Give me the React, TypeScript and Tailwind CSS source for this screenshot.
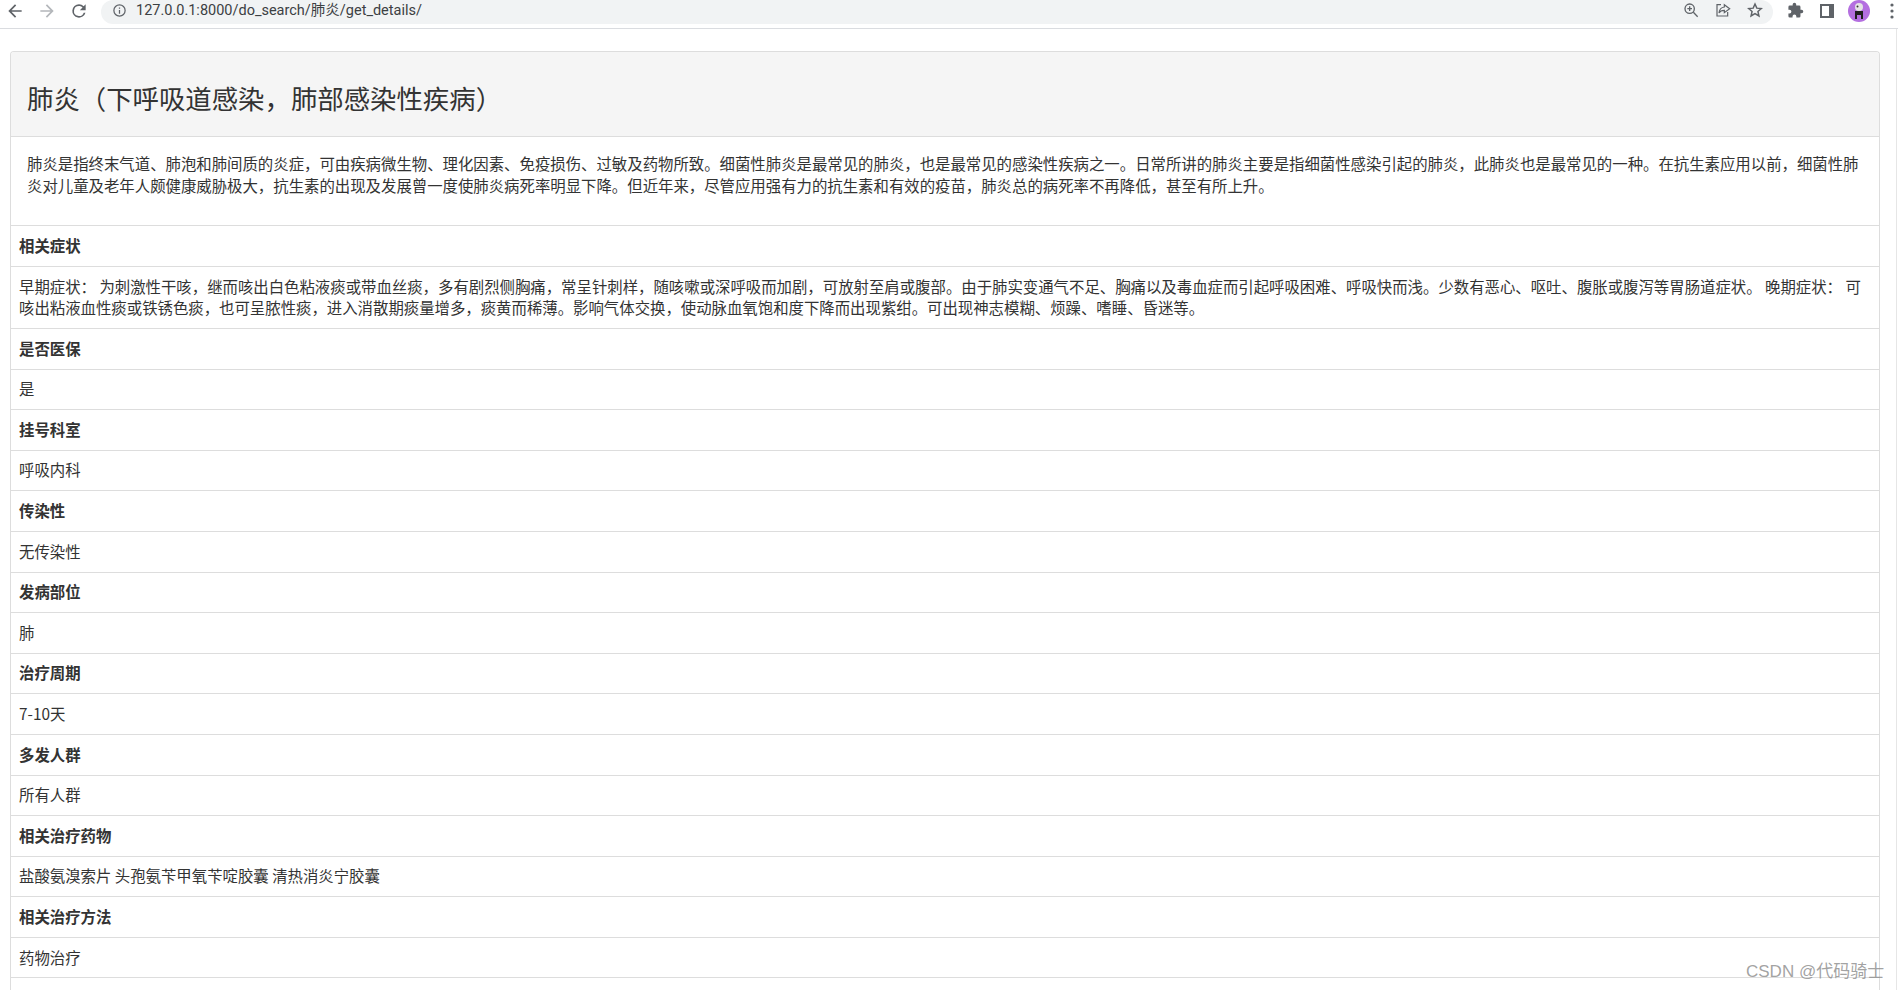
import React from "react";

const font = { fontFamily: '"Noto Sans CJK SC", "Liberation Sans", sans-serif' };

const rows: [string, string][] = [
  ["相关症状", "早期症状： 为刺激性干咳，继而咳出白色粘液痰或带血丝痰，多有剧烈侧胸痛，常呈针刺样，随咳嗽或深呼吸而加剧，可放射至肩或腹部。由于肺实变通气不足、胸痛以及毒血症而引起呼吸困难、呼吸快而浅。少数有恶心、呕吐、腹胀或腹泻等胃肠道症状。 晚期症状： 可咳出粘液血性痰或铁锈色痰，也可呈脓性痰，进入消散期痰量增多，痰黄而稀薄。影响气体交换，使动脉血氧饱和度下降而出现紫绀。可出现神志模糊、烦躁、嗜睡、昏迷等。"],
  ["是否医保", "是"],
  ["挂号科室", "呼吸内科"],
  ["传染性", "无传染性"],
  ["发病部位", "肺"],
  ["治疗周期", "7-10天"],
  ["多发人群", "所有人群"],
  ["相关治疗药物", "盐酸氨溴索片 头孢氨苄甲氧苄啶胶囊 清热消炎宁胶囊"],
  ["相关治疗方法", "药物治疗"],
];

function Item({ children, bold }: { children: React.ReactNode; bold?: boolean }) {
  return (
    <div className={`border-b border-[#dddddd] pl-[8px] pr-[12px] pt-[8.7px] pb-[9.5px] text-[15.4px] leading-[21.4px] ${bold ? "font-bold" : ""}`}>
      {children}
    </div>
  );
}

export default function App() {
  return (
    <div className="relative flex h-[990px] w-[1898px] flex-col overflow-hidden bg-white text-[#333333]" style={font}>
      {/* browser toolbar */}
      <div className="flex h-[29px] shrink-0 items-start border-b border-[#dadce0] bg-white">
        <div className="flex h-[21px] w-[101px] shrink-0 items-center text-[#5f6368]">
          <svg className="ml-[5px]" width="20" height="20" viewBox="0 0 24 24" fill="currentColor"><path d="M20 11H7.83l5.59-5.59L12 4l-8 8 8 8 1.41-1.41L7.83 13H20z" /></svg>
          <svg className="ml-[12px] text-[#b4b7bb]" width="20" height="20" viewBox="0 0 24 24" fill="currentColor"><path d="M12 4l-1.41 1.41L16.17 11H4v2h12.17l-5.58 5.59L12 20l8-8z" /></svg>
          <svg className="ml-[12px]" width="20" height="20" viewBox="0 0 24 24" fill="currentColor"><path d="M17.65 6.35A7.96 7.96 0 0 0 12 4a8 8 0 1 0 7.73 10h-2.08A6 6 0 1 1 12 6c1.66 0 3.14.69 4.22 1.78L13 11h7V4z" /></svg>
        </div>
        <div className="flex h-[24px] w-[1672px] items-center rounded-[12px] bg-[#f1f3f4] pb-[4px] pl-[11px] pr-[10px]">
          <svg width="15" height="15" viewBox="0 0 24 24" fill="none" stroke="#5f6368" strokeWidth="2"><circle cx="12" cy="12" r="9" /><path d="M12 11v6M12 7v2" /></svg>
          <span className="ml-[9px] mt-[1px] text-[14.5px] leading-[20px] text-[#3c4043]" style={{ fontFamily: '"Roboto", "Noto Sans CJK SC", sans-serif' }}>127.0.0.1:8000/do_search/肺炎/get_details/</span>
          <div className="ml-auto flex items-center gap-[16px] text-[#5f6368]">
            <svg width="16" height="16" viewBox="0 0 24 24" fill="none" stroke="currentColor" strokeWidth="2"><circle cx="10" cy="10" r="7" /><path d="M15.5 15.5L22 22M10 6.5v7M6.5 10h7" /></svg>
            <svg width="16" height="16" viewBox="0 0 24 24" fill="none" stroke="currentColor" strokeWidth="1.8"><path d="M9 4H3v17h16v-6" /><path d="M14 4l8 6-8 6v-3.5c-4 0-6.5 1-8 4 .5-5 3.5-8.500 8-9z" /></svg>
            <svg width="16" height="16" viewBox="0 0 24 24" fill="none" stroke="currentColor" strokeWidth="2.200"><path d="M12 3l2.700 6.200 6.800.6-5.100 4.500 1.500 6.700L12 17.400 6.100 21l1.500-6.700-5.100-4.500 6.800-.6z" /></svg>
          </div>
        </div>
        <div className="flex h-[21px] flex-1 items-center text-[#5f6368]">
          <svg className="ml-[14px]" width="17" height="17" viewBox="0 0 24 24" fill="currentColor"><path d="M20.500 11H19V7a2 2 0 0 0-2-2h-4V3.500a2.500 2.500 0 0 0-5 0V5H4a2 2 0 0 0-2 2v3.800h1.500a2.700 2.700 0 0 1 0 5.400H2V20a2 2 0 0 0 2 2h3.800v-1.500a2.700 2.700 0 0 1 5.400 0V22H17a2 2 0 0 0 2-2v-4h1.500a2.500 2.500 0 0 0 0-5z" /></svg>
          <svg className="ml-[16px]" width="14" height="14" viewBox="0 0 14 14"><rect width="14" height="14" fill="#5f6368" /><rect x="2" y="2" width="7" height="10" fill="#ffffff" /></svg>
          <svg className="ml-[14px]" width="22" height="22" viewBox="0 0 22 22"><circle cx="11" cy="11" r="11" fill="#b46fe0" /><circle cx="11" cy="7" r="4" fill="#e4e4e4" /><circle cx="9.500" cy="6.500" r="1" fill="#333333" /><path d="M7 11h8v8h-2v-4h-4v4H7z" fill="#1f1f1f" /></svg>
          <svg className="ml-[20px]" width="4" height="16" viewBox="0 0 4 16" fill="#5f6368"><circle cx="2" cy="2" r="1.600" /><circle cx="2" cy="8" r="1.600" /><circle cx="2" cy="14" r="1.600" /></svg>
        </div>
      </div>

      {/* page and scrollbar edge */}
      <div className="flex min-h-0 flex-1">
        <div className="flex-1 pl-[10px] pr-[16px] pt-[22px]">
          <div className="rounded-t-[4px] border-x border-t border-[#dddddd]">
            <div className="flex h-[85px] items-center rounded-t-[3px] border-b border-[#dddddd] bg-[#f5f5f5] pl-[16px] pt-[7px]">
              <h3 className="text-[26.4px] leading-[30px] font-normal">肺炎（下呼吸道感染，肺部感染性疾病）</h3>
            </div>
            <div className="h-[89.4px] border-b border-[#dddddd] pl-[16px] pr-[15px] pt-[16px] text-[15.4px] leading-[21.8px]">
              肺炎是指终末气道、肺泡和肺间质的炎症，可由疾病微生物、理化因素、免疫损伤、过敏及药物所致。细菌性肺炎是最常见的肺炎，也是最常见的感染性疾病之一。日常所讲的肺炎主要是指细菌性感染引起的肺炎，此肺炎也是最常见的一种。在抗生素应用以前，细菌性肺炎对儿童及老年人颇健康威胁极大，抗生素的出现及发展曾一度使肺炎病死率明显下降。但近年来，尽管应用强有力的抗生素和有效的疫苗，肺炎总的病死率不再降低，甚至有所上升。
            </div>
            {rows.map(([h, v]) => (
              <React.Fragment key={h}>
                <Item bold>{h}</Item>
                <Item>{v}</Item>
              </React.Fragment>
            ))}
            <Item>&nbsp;</Item>
          </div>
        </div>
        <div className="w-[2px] shrink-0 border-l border-[#e6e6e6]" />
      </div>

      <div className="absolute left-[1746px] top-[961px] text-[17px] leading-[22px] text-[#8a8a8a]/80" style={{ fontFamily: '"Liberation Sans", "Noto Sans CJK SC", sans-serif' }}>CSDN @代码骑士</div>
    </div>
  );
}
